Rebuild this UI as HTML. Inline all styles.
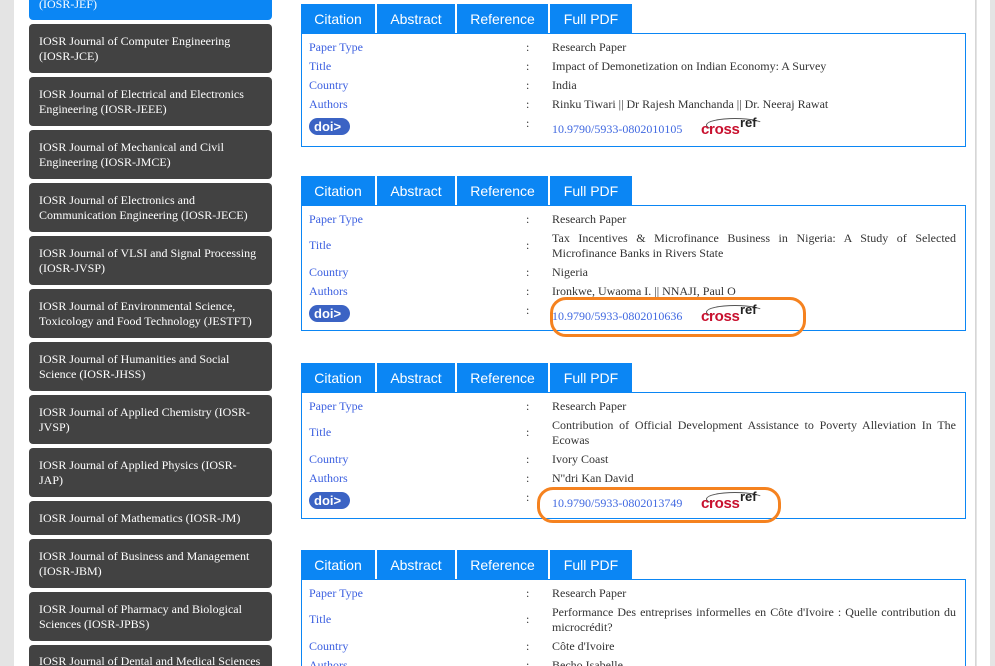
<!DOCTYPE html>
<html style="overflow:hidden;height:666px"><head><meta charset="utf-8"><style>
*{margin:0;padding:0;box-sizing:border-box}
body{width:995px;height:666px;overflow:hidden;position:relative;background:#e4e4e4;font-family:"Liberation Serif",serif}
.wrap{position:absolute;left:14px;top:0;width:962px;height:666px;background:#fff;border-right:1px solid #d6d6d6}
.rgt{position:absolute;left:977px;top:0;width:13px;height:666px;background:#fff}
.side{position:absolute;left:29px;width:243px;background:#424242;border-radius:4px;color:#fff;font-size:12px;line-height:15px;padding:0 13px 0 10px;display:flex;align-items:center}
.side.blue{background:#0b86f4}
.tab{position:absolute;height:29px;background:#0b86f4;color:#fff;font-family:"Liberation Sans",sans-serif;font-size:14px;text-align:center;line-height:30px}
.box{position:absolute;left:301px;width:665px;border:1px solid #0b86f4;background:#fff}
.t{position:absolute;font-size:12px;line-height:15px;color:#333;white-space:nowrap}
.l{color:#3b5fe0}
.a{color:#4169e1}
.j{white-space:normal;text-align:justify;width:404px;left:552px}
.doi{position:absolute;width:41px;height:17px;background:#3b63c4;border-radius:9px;color:#fff;font-family:"Liberation Sans",sans-serif;font-weight:bold;font-size:13px;line-height:17px;padding-left:5px}
.cr{position:absolute;width:66px;height:22px;font-family:"Liberation Sans",sans-serif;font-weight:bold}
.cr .c{position:absolute;left:1px;top:7px;line-height:14px;color:#c8102e;font-size:15px;letter-spacing:-0.3px}
.cr .r{position:absolute;left:40px;top:0px;line-height:13px;color:#222;font-size:13px}
.cr .s{position:absolute;left:6px;top:2px;width:58px;height:14px;border:1px solid #555;border-radius:50%;border-bottom-color:transparent;border-right-color:transparent}
.ov{position:absolute;border:3px solid #f5821f;border-radius:16px}
</style></head><body>
<div class="wrap"></div><div class="rgt"></div>

<div class="side blue" style="top:-30px;height:50px;align-items:flex-end;padding-bottom:8px">(IOSR-JEF)</div>
<div class="side" style="top:24px;height:49px">IOSR Journal of Computer Engineering (IOSR-JCE)</div>
<div class="side" style="top:77px;height:49px">IOSR Journal of Electrical and Electronics Engineering (IOSR-JEEE)</div>
<div class="side" style="top:130px;height:49px">IOSR Journal of Mechanical and Civil Engineering (IOSR-JMCE)</div>
<div class="side" style="top:183px;height:49px">IOSR Journal of Electronics and Communication Engineering (IOSR-JECE)</div>
<div class="side" style="top:236px;height:49px">IOSR Journal of VLSI and Signal Processing (IOSR-JVSP)</div>
<div class="side" style="top:289px;height:49px">IOSR Journal of Environmental Science, Toxicology and Food Technology (JESTFT)</div>
<div class="side" style="top:342px;height:49px">IOSR Journal of Humanities and Social Science (IOSR-JHSS)</div>
<div class="side" style="top:395px;height:49px">IOSR Journal of Applied Chemistry (IOSR-JVSP)</div>
<div class="side" style="top:448px;height:49px">IOSR Journal of Applied Physics (IOSR-JAP)</div>
<div class="side" style="top:501px;height:34px">IOSR Journal of Mathematics (IOSR-JM)</div>
<div class="side" style="top:539px;height:49px">IOSR Journal of Business and Management (IOSR-JBM)</div>
<div class="side" style="top:592px;height:49px">IOSR Journal of Pharmacy and Biological Sciences (IOSR-JPBS)</div>
<div class="side" style="top:645px;height:49px;align-items:flex-start;padding-top:9px;white-space:nowrap">IOSR Journal of Dental and Medical Sciences</div>

<!-- Block 1 -->
<div class="tab" style="left:301px;top:4px;width:74px">Citation</div>
<div class="tab" style="left:377px;top:4px;width:78px">Abstract</div>
<div class="tab" style="left:457px;top:4px;width:91px">Reference</div>
<div class="tab" style="left:550px;top:4px;width:82px">Full PDF</div>
<div class="box" style="top:33px;height:114px"></div>
<div class="t l" style="left:309px;top:40px">Paper Type</div><div class="t" style="left:526px;top:40px">:</div><div class="t" style="left:552px;top:40px">Research Paper</div>
<div class="t l" style="left:309px;top:59px">Title</div><div class="t" style="left:526px;top:59px">:</div><div class="t" style="left:552px;top:59px">Impact of Demonetization on Indian Economy: A Survey</div>
<div class="t l" style="left:309px;top:78px">Country</div><div class="t" style="left:526px;top:78px">:</div><div class="t" style="left:552px;top:78px">India</div>
<div class="t l" style="left:309px;top:97px">Authors</div><div class="t" style="left:526px;top:97px">:</div><div class="t" style="left:552px;top:97px">Rinku Tiwari || Dr Rajesh Manchanda || Dr. Neeraj Rawat</div>
<div class="doi" style="left:309px;top:118px">doi&gt;</div><div class="t" style="left:526px;top:116px">:</div><div class="t a" style="left:552px;top:122px">10.9790/5933-0802010105</div>
<div class="cr" style="left:700px;top:116px"><span class="s"></span><span class="c">cross</span><span class="r">ref</span></div>

<!-- Block 2 -->
<div class="tab" style="left:301px;top:176px;width:74px">Citation</div>
<div class="tab" style="left:377px;top:176px;width:78px">Abstract</div>
<div class="tab" style="left:457px;top:176px;width:91px">Reference</div>
<div class="tab" style="left:550px;top:176px;width:82px">Full PDF</div>
<div class="box" style="top:205px;height:126px"></div>
<div class="t l" style="left:309px;top:212px">Paper Type</div><div class="t" style="left:526px;top:212px">:</div><div class="t" style="left:552px;top:212px">Research Paper</div>
<div class="t l" style="left:309px;top:238px">Title</div><div class="t" style="left:526px;top:238px">:</div><div class="t j" style="top:231px">Tax Incentives &amp; Microfinance Business in Nigeria: A Study of Selected Microfinance Banks in Rivers State</div>
<div class="t l" style="left:309px;top:265px">Country</div><div class="t" style="left:526px;top:265px">:</div><div class="t" style="left:552px;top:265px">Nigeria</div>
<div class="t l" style="left:309px;top:284px">Authors</div><div class="t" style="left:526px;top:284px">:</div><div class="t" style="left:552px;top:284px">Ironkwe, Uwaoma I. || NNAJI, Paul O</div>
<div class="doi" style="left:309px;top:305px">doi&gt;</div><div class="t" style="left:526px;top:303px">:</div><div class="t a" style="left:552px;top:309px">10.9790/5933-0802010636</div>
<div class="cr" style="left:700px;top:303px"><span class="s"></span><span class="c">cross</span><span class="r">ref</span></div>
<div class="ov" style="left:550px;top:297px;width:256px;height:40px"></div>

<!-- Block 3 -->
<div class="tab" style="left:301px;top:363px;width:74px">Citation</div>
<div class="tab" style="left:377px;top:363px;width:78px">Abstract</div>
<div class="tab" style="left:457px;top:363px;width:91px">Reference</div>
<div class="tab" style="left:550px;top:363px;width:82px">Full PDF</div>
<div class="box" style="top:392px;height:127px"></div>
<div class="t l" style="left:309px;top:399px">Paper Type</div><div class="t" style="left:526px;top:399px">:</div><div class="t" style="left:552px;top:399px">Research Paper</div>
<div class="t l" style="left:309px;top:425px">Title</div><div class="t" style="left:526px;top:425px">:</div><div class="t j" style="top:418px">Contribution of Official Development Assistance to Poverty Alleviation In The Ecowas</div>
<div class="t l" style="left:309px;top:452px">Country</div><div class="t" style="left:526px;top:452px">:</div><div class="t" style="left:552px;top:452px">Ivory Coast</div>
<div class="t l" style="left:309px;top:471px">Authors</div><div class="t" style="left:526px;top:471px">:</div><div class="t" style="left:552px;top:471px">N''dri Kan David</div>
<div class="doi" style="left:309px;top:492px">doi&gt;</div><div class="t" style="left:526px;top:490px">:</div><div class="t a" style="left:552px;top:496px">10.9790/5933-0802013749</div>
<div class="cr" style="left:700px;top:490px"><span class="s"></span><span class="c">cross</span><span class="r">ref</span></div>
<div class="ov" style="left:537px;top:487px;width:244px;height:36px"></div>

<!-- Block 4 -->
<div class="tab" style="left:301px;top:550px;width:74px">Citation</div>
<div class="tab" style="left:377px;top:550px;width:78px">Abstract</div>
<div class="tab" style="left:457px;top:550px;width:91px">Reference</div>
<div class="tab" style="left:550px;top:550px;width:82px">Full PDF</div>
<div class="box" style="top:579px;height:120px"></div>
<div class="t l" style="left:309px;top:586px">Paper Type</div><div class="t" style="left:526px;top:586px">:</div><div class="t" style="left:552px;top:586px">Research Paper</div>
<div class="t l" style="left:309px;top:612px">Title</div><div class="t" style="left:526px;top:612px">:</div><div class="t j" style="top:605px">Performance Des entreprises informelles en Côte d'Ivoire : Quelle contribution du microcrédit?</div>
<div class="t l" style="left:309px;top:639px">Country</div><div class="t" style="left:526px;top:639px">:</div><div class="t" style="left:552px;top:639px">Côte d'Ivoire</div>
<div class="t l" style="left:309px;top:658px">Authors</div><div class="t" style="left:526px;top:658px">:</div><div class="t" style="left:552px;top:658px">Becho Isabelle</div>
</body></html>
